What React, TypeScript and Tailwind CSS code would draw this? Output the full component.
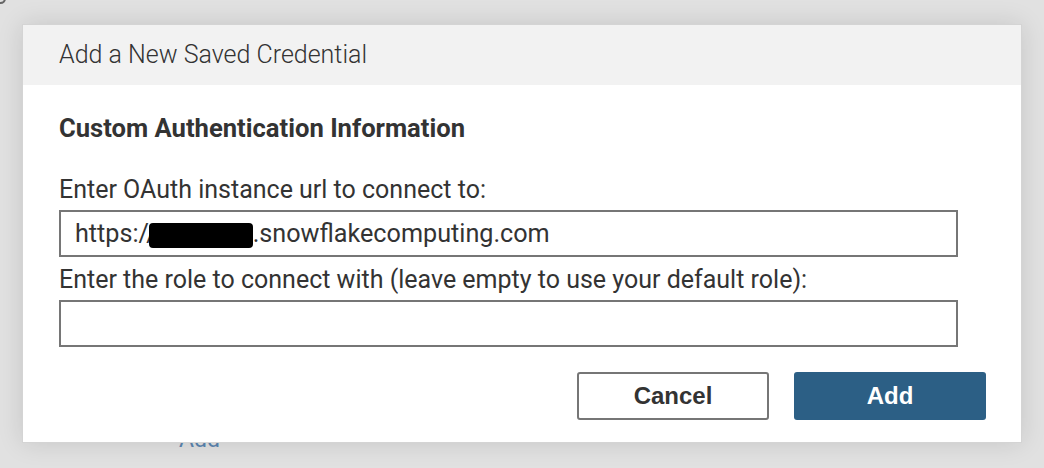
export default function App() {
  return (
    <div className="relative w-[1044px] h-[468px] overflow-hidden bg-[#e1e1e1] font-['Roboto',sans-serif] text-[#333333]">
      {/* page behind the dialog */}
      <div className="absolute left-[-5px] top-[-7px] w-[11px] h-[11px] rounded-full border-2 border-[#666666]" />
      <div className="absolute left-[179px] top-[427px] text-[23px] leading-[26px] text-[#5b85b0]">Add</div>

      {/* dialog */}
      <div className="absolute left-[22px] top-[24px] w-[1000px] h-[419px] bg-white border border-[#d4d4d4] shadow-[0_0_24px_rgba(0,0,0,0.12)]">
        <div className="h-[60px] bg-[#f2f2f2] flex items-center pl-[36px] text-[25px] font-light text-[#333333]">
          Add a New Saved Credential
        </div>
        <div className="pl-[36px] pr-[63px] pt-[28px]">
          <h2 className="text-[25.6px] font-bold text-[#333333] leading-[30px]">Custom Authentication Information</h2>
          <label className="block mt-[32px] text-[25px] leading-[30px]">Enter OAuth instance url to connect to:</label>
          <div className="mt-[5px] h-[47px] border-2 border-[#767676] flex items-center pl-[14px] text-[25.2px]">
            <span>https://</span>
            <span className="inline-block w-[104px] h-[25px] bg-black rounded-[4px] -ml-[8px] mt-[3px]" />
            <span>.snowflakecomputing.com</span>
          </div>
          <label className="block mt-[8px] text-[25px] leading-[30px]">
            Enter the role to connect with (leave empty to use your default role):
          </label>
          <div className="mt-[5px] h-[47px] border-2 border-[#767676]" />
          <div className="flex justify-end gap-[25px] mt-[25px] mr-[-28px]">
            <button className="w-[192px] h-[48px] border-2 border-[#767676] rounded-[3px] bg-white text-[24px] font-bold text-[#333333] font-['Liberation_Sans',sans-serif]">
              Cancel
            </button>
            <button className="w-[192px] h-[48px] rounded-[3px] bg-[#2c5f85] text-[24px] font-bold text-white font-['Liberation_Sans',sans-serif]">
              Add
            </button>
          </div>
        </div>
      </div>
    </div>
  );
}
